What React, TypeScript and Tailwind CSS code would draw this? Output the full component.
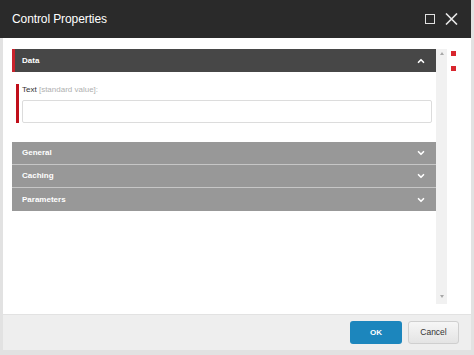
import { ChevronDown, ChevronUp } from 'lucide-react';

const sections = ['General', 'Caching', 'Parameters'];

export default function App() {
    return (
        <div className="w-[474px] h-[355px] bg-[#e2e2e2] overflow-hidden font-['Liberation_Sans',Arial,sans-serif]">
            <div className="w-[471px] h-[350px] flex flex-col">
                {/* Title bar */}
                <div className="h-[38px] bg-[#2a2a2a] flex items-center pl-[12px] pr-[13px]">
                    <h1 className="text-[12px] text-white tracking-[-0.1px] flex-1">Control Properties</h1>
                    <div className="flex items-center gap-[10px]">
                        <div className="w-[10px] h-[10px] border-[1.5px] border-[#e0e0e0]" />
                        <svg width="13" height="12" viewBox="0 0 13 12" className="text-[#e8e8e8]">
                            <path d="M1 0.5 L12 11.5 M12 0.5 L1 11.5" stroke="currentColor" strokeWidth="1.6" />
                        </svg>
                    </div>
                </div>

                {/* Body */}
                <div className="flex-1 bg-white ml-[3px] flex pl-[9px] pt-[11px]">
                    <div className="w-[424px]">
                        {/* Data section (open) */}
                        <div className="h-[23px] bg-[#474747] border-l-[3px] border-[#c8232c] flex items-center pl-[7px] pr-[10px]">
                            <span className="flex-1 text-[8px] font-bold text-white">Data</span>
                            <ChevronUp className="w-[10px] h-[10px] text-white" strokeWidth={4} />
                        </div>
                        <div className="mt-[12px] ml-[4px] flex">
                            <div className="w-[3px] h-[39px] bg-[#c00f1a]" />
                            <div className="pl-[3px]">
                                <div className="text-[8px] leading-[10px] pt-[1px] text-[#333]">
                                    Text <span className="text-[#b0b0b0]">[standard value]:</span>
                                </div>
                                <div className="mt-[5px] w-[410px] h-[23px] border border-[#dcdcdc] rounded-[2px] bg-white" />
                            </div>
                        </div>

                        {/* Collapsed sections */}
                        <div className="mt-[19px]">
                            {sections.map((s, i) => (
                                <div
                                    key={s}
                                    className={`h-[23px] bg-[#989898] flex items-center pl-[10px] pr-[10px] ${i < sections.length - 1 ? 'border-b border-[#c6c6c6]' : ''}`}
                                >
                                    <span className="flex-1 text-[8px] font-bold text-white">{s}</span>
                                    <ChevronDown className="w-[10px] h-[10px] text-white" strokeWidth={4} />
                                </div>
                            ))}
                        </div>
                    </div>

                    {/* Scrollbar */}
                    <div className="w-[11px] h-[255px] bg-[#f1f1f1] flex flex-col items-center justify-between py-[3px]">
                        <div className="w-0 h-0 border-l-[2.5px] border-r-[2.5px] border-b-[3px] border-l-transparent border-r-transparent border-b-[#a8a8a8]" />
                        <div className="w-0 h-0 border-l-[2.5px] border-r-[2.5px] border-t-[3px] border-l-transparent border-r-transparent border-t-[#a8a8a8] mb-[3px]" />
                    </div>

                    {/* Validation markers */}
                    <div className="ml-[4px] pt-[2px] flex flex-col gap-[10px]">
                        <div className="w-[5px] h-[5px] bg-[#d8262e]" />
                        <div className="w-[5px] h-[5px] bg-[#d8262e]" />
                    </div>
                </div>

                {/* Footer */}
                <div className="h-[36px] bg-[#eeeeee] border-t border-[#e2e2e2] ml-[3px] flex items-center justify-end gap-[6px] pr-[12px]">
                    <button className="w-[52px] h-[23px] rounded-[3px] bg-[#1c86bd] text-white text-[8px] font-bold">OK</button>
                    <button className="w-[51px] h-[23px] rounded-[3px] bg-[#ececec] bg-gradient-to-b from-[#f6f6f6] to-[#e4e4e4] border border-[#cfcfcf] text-[#333] text-[8.5px]">
                        Cancel
                    </button>
                </div>
            </div>
        </div>
    );
}
